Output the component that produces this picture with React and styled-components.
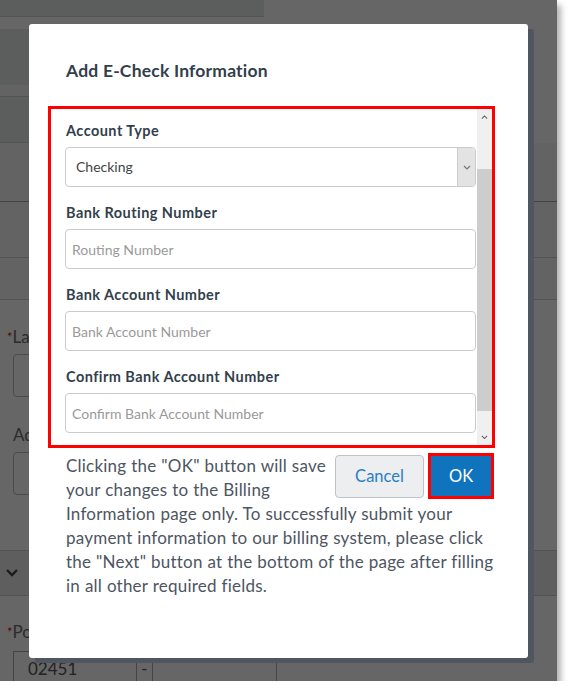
import React from "react";
import styled, { createGlobalStyle } from "styled-components";

const GlobalStyle = createGlobalStyle`
  body {
    margin: 0;
    background: #fff;
    font-family: Lato, "Liberation Sans", sans-serif;
  }
`;

// screenshot frame with its drop shadow
const Frame = styled.div`
  position: relative;
  width: 557px;
  height: 681px;
  overflow: hidden;
  background: #fff;
  box-shadow: 4px 5px 6px rgba(0, 0, 0, 0.3);
`;

// ---- page underneath the dialog ----
const Page = styled.div`
  display: flex;
  flex-direction: column;
`;

const Band = styled.div`
  flex: none;
  width: ${(p) => p.$w || "100%"};
  height: ${(p) => p.$h}px;
  background: ${(p) => p.$bg || "#fff"};
  border-bottom: ${(p) => (p.$line ? `1px solid ${p.$line}` : "none")};
`;

const Gap = styled.div`
  flex: none;
  height: ${(p) => p.$h}px;
`;

const FieldLabel = styled.div`
  padding-left: 13px;
  font-size: 17px;
  line-height: 22px;
  color: #6e6e6e;
  margin-bottom: ${(p) => p.$mb || 6}px;
`;

const Star = styled.span`
  margin-left: -6px;
  color: #d01010;
  font-size: 13px;
  vertical-align: top;
`;

const PageInput = styled.div`
  margin-left: 13px;
  width: 300px;
  height: 41px;
  border: 1px solid #bbb;
  border-radius: 4px;
`;

const SectionBar = styled.div`
  height: 44px;
  background: #ebebeb;
  border-top: 1px solid #cfcfcf;
  border-bottom: 1px solid #cfcfcf;
  display: flex;
  align-items: center;
  padding-left: 6px;
`;

const ZipRow = styled.div`
  display: flex;
  margin-left: 13px;
  height: 32px;
`;

const ZipCell = styled.div`
  width: ${(p) => p.$w}px;
  border: 1px solid #aaa;
  border-bottom: none;
  border-left: ${(p) => (p.$first ? "1px solid #aaa" : "none")};
  font-size: 17px;
  color: #555;
  padding-left: ${(p) => (p.$first ? 14 : 0)}px;
  line-height: 34px;
  text-align: ${(p) => (p.$center ? "center" : "left")};
  box-sizing: border-box;
`;

const Overlay = styled.div`
  position: absolute;
  inset: 0;
  background: rgba(0, 0, 0, 0.6);
`;

// ---- dialog ----
const Modal = styled.div`
  position: absolute;
  left: 29px;
  top: 24px;
  width: 499px;
  height: 634px;
  box-sizing: border-box;
  padding: 37px 33px 0 19px;
  background: #fff;
  border-radius: 3px;
  box-shadow: 6px 5px 0 #50565f;
`;

const Title = styled.h2`
  margin: 0 0 25px 18px;
  font-size: 17.5px;
  letter-spacing: 0.2px;
  line-height: 20px;
  font-weight: 700;
  color: #333f4c;
`;

const ScrollBox = styled.div`
  display: flex;
  height: 342px;
  box-sizing: border-box;
  border: 3px solid #ff0000;
`;

const FormArea = styled.div`
  flex: 1;
  padding: 12px 1px 12px 14px;
  overflow: hidden;
`;

const Field = styled.div`
  margin-bottom: 16px;
  &:last-child {
    margin-bottom: 0;
  }
`;

const Label = styled.label`
  display: block;
  padding-left: 1px;
  margin-bottom: 6px;
  font-size: 14.5px;
  letter-spacing: 0.45px;
  line-height: 20px;
  font-weight: 700;
  color: #333f4c;
`;

const SelectBox = styled.div`
  display: flex;
  height: 40px;
  box-sizing: border-box;
  border: 1px solid #ccc;
  border-radius: 4px;
  overflow: hidden;
`;

const SelectValue = styled.div`
  flex: 1;
  padding-left: 10px;
  font-size: 14px;
  line-height: 38px;
  color: #444;
`;

const DropButton = styled.div`
  width: 17px;
  background: #e3e3e3;
  border-left: 1px solid #ccc;
  display: flex;
  align-items: center;
  justify-content: center;
`;

const TextInput = styled.input`
  display: block;
  width: 100%;
  height: 40px;
  box-sizing: border-box;
  border: 1px solid #ccc;
  border-radius: 4px;
  padding: 0 6px;
  font-family: Lato, "Liberation Sans", sans-serif;
  font-size: 14px;
  color: #444;
  outline: none;
  &::placeholder {
    color: #9a9a9a;
  }
`;

const Scrollbar = styled.div`
  width: 15px;
  background: #f0f0f0;
  display: flex;
  flex-direction: column;
`;

const Arrow = styled.div`
  height: 16px;
  display: flex;
  align-items: center;
  justify-content: center;
`;

const Thumb = styled.div`
  margin-top: 44px;
  height: 242px;
  background: #cdcdcd;
`;

const Spacer = styled.div`
  flex: 1;
`;

const Footer = styled.div`
  margin: 6px 1px 0 18px;
`;

const FooterTop = styled.div`
  display: flex;
  align-items: flex-start;
`;

const Buttons = styled.div`
  display: flex;
  align-items: center;
  gap: 4px;
  margin-top: -1px;
  margin-left: auto;
`;

const CancelButton = styled.button`
  width: 89px;
  height: 43px;
  background: #eceef0;
  border: 1px solid #bfc3c7;
  border-radius: 4px;
  color: #2a7fc3;
  font-family: Lato, "Liberation Sans", sans-serif;
  font-size: 16.5px;
  padding: 0;
`;

const Highlight = styled.div`
  border: 3px solid #ff0000;
`;

const OkButton = styled.button`
  display: block;
  width: 60px;
  height: 40px;
  background: #0f74bd;
  border: none;
  color: #fff;
  font-family: Lato, "Liberation Sans", sans-serif;
  font-size: 16.5px;
  padding: 0;
`;

const Note = styled.p`
  margin: 0;
  font-size: 17px;
  letter-spacing: 0.22px;
  word-spacing: 0.3px;
  line-height: 24px;
  color: #4d5562;
  white-space: nowrap;
`;

const Chevron = ({ up, w = 8, color = "#666" }) => (
  <svg width={w} height={w / 2 + 1} viewBox="0 0 8 5">
    <polyline
      points={up ? "1,4 4,1 7,4" : "1,1 4,4 7,1"}
      fill="none"
      stroke={color}
      strokeWidth="1.2"
    />
  </svg>
);

const fields = [
  { label: "Bank Routing Number", placeholder: "Routing Number" },
  { label: "Bank Account Number", placeholder: "Bank Account Number" },
  { label: "Confirm Bank Account Number", placeholder: "Confirm Bank Account Number" },
];

export default function App() {
  return (
    <>
      <GlobalStyle />
      <Frame>
        <Page>
          <Band $h={16} $w="264px" $bg="#e7eaea" $line="#d3d3d3" />
          <Gap $h={12} />
          <Band $h={56} $w="520px" $bg="#e7eaea" />
          <Band $h={11} $w="520px" $bg="#f8f8f8" $line="#d3d3d3" />
          <Band $h={45} $w="520px" $bg="#e7eaea" $line="#d3d3d3" />
          <Band $h={58} $bg="#f8f8f8" $line="#a8a8a8" />
          <Band $h={55} $bg="#f8f8f8" $line="#d3d3d3" />
          <Band $h={41} $bg="#f8f8f8" $line="#d3d3d3" />
          <Gap $h={26} />
          <FieldLabel>
            <Star>*</Star>Last Name
          </FieldLabel>
          <PageInput />
          <Gap $h={27} />
          <FieldLabel $mb={6}>Address</FieldLabel>
          <PageInput />
          <Gap $h={55} />
          <SectionBar>
            <svg width="12" height="8" viewBox="0 0 12 8">
              <polyline points="1,1 6,6 11,1" fill="none" stroke="#444" strokeWidth="2.4" />
            </svg>
          </SectionBar>
          <Gap $h={25} />
          <FieldLabel $mb={8}>
            <Star>*</Star>Postal Code
          </FieldLabel>
          <ZipRow>
            <ZipCell $w={124} $first>
              02451
            </ZipCell>
            <ZipCell $w={16} $center>
              -
            </ZipCell>
            <ZipCell $w={124} />
          </ZipRow>
        </Page>

        <Overlay />

        <Modal>
          <Title>Add E-Check Information</Title>
          <ScrollBox>
            <FormArea>
              <Field>
                <Label>Account Type</Label>
                <SelectBox>
                  <SelectValue>Checking</SelectValue>
                  <DropButton>
                    <Chevron w={8} color="#777" />
                  </DropButton>
                </SelectBox>
              </Field>
              {fields.map((f) => (
                <Field key={f.label}>
                  <Label>{f.label}</Label>
                  <TextInput placeholder={f.placeholder} />
                </Field>
              ))}
            </FormArea>
            <Scrollbar>
              <Arrow>
                <Chevron up w={7} color="#606060" />
              </Arrow>
              <Thumb />
              <Spacer />
              <Arrow>
                <Chevron w={7} color="#606060" />
              </Arrow>
            </Scrollbar>
          </ScrollBox>
          <Footer>
            <FooterTop>
              <Note>
                Clicking the "OK" button will save
                <br />
                your changes to the Billing
              </Note>
              <Buttons>
                <CancelButton>Cancel</CancelButton>
                <Highlight>
                  <OkButton>OK</OkButton>
                </Highlight>
              </Buttons>
            </FooterTop>
            <Note>
              Information page only. To successfully submit your
              <br />
              payment information to our billing system, please click
              <br />
              the "Next" button at the bottom of the page after filling
              <br />
              in all other required fields.
            </Note>
          </Footer>
        </Modal>
      </Frame>
    </>
  );
}
